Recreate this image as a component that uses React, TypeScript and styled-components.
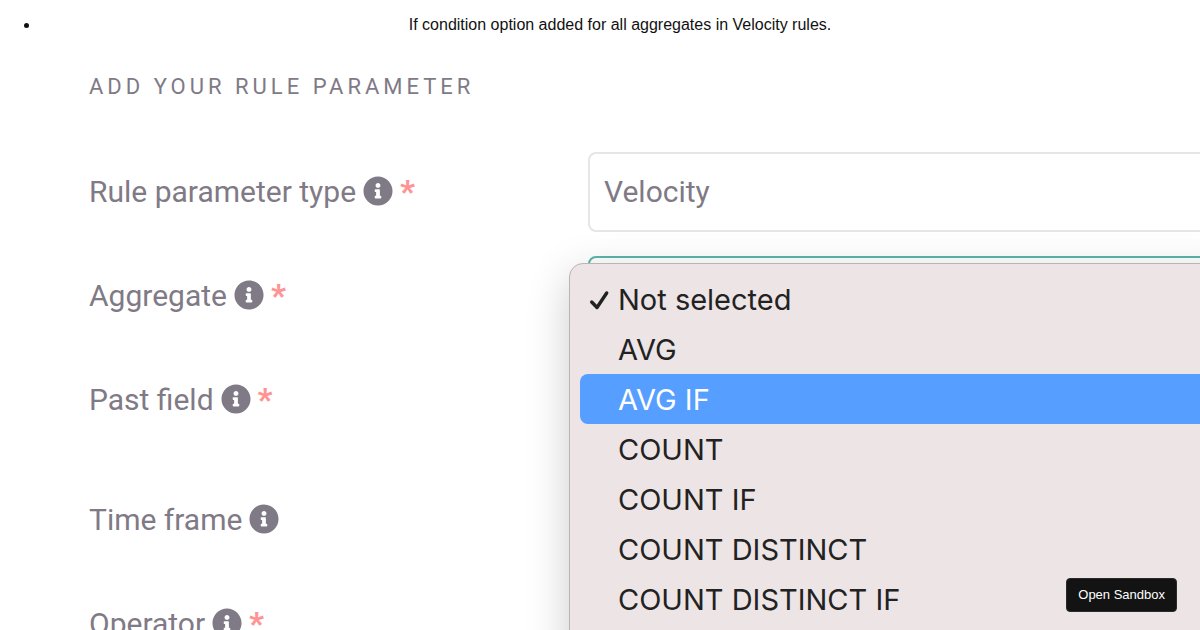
import React from "react";
import styled, { createGlobalStyle } from "styled-components";
import { FaInfoCircle } from "react-icons/fa";

const GlobalStyle = createGlobalStyle`
  * { box-sizing: border-box; }
  body {
    margin: 0;
    background: #fff;
    color: #111;
    font-family: "Helvetica Neue", Helvetica, "Liberation Sans", sans-serif;
  }
`;

const Page = styled.main`
  position: relative;
  height: 100vh;
  overflow: hidden;
`;

const Notes = styled.ul`
  margin: 16px 0 0;
  padding-left: 40px;
  font-size: 16px;
  line-height: 18px;
  text-align: center;
`;

const Form = styled.form`
  display: flex;
  flex-direction: column;
  margin: 36px -40px 0 89px;
  color: #7f7a86;
  font-family: Roboto, sans-serif;
`;

const Title = styled.h2`
  margin: 0 0 48px;
  font-size: 22px;
  font-weight: 400;
  line-height: 34px;
  letter-spacing: 4px;
`;

const Row = styled.div<{ $spaced?: boolean }>`
  display: grid;
  grid-template-columns: 499px 1fr;
  align-items: center;
  height: 80px;
  margin-bottom: ${(p) => (p.$spaced ? 40 : 24)}px;
`;

const LabelCell = styled.div`
  display: flex;
  align-items: center;
  gap: 7px;
  padding-bottom: 2px;
`;

const Label = styled.label`
  padding-top: 2px;
  font-size: 30px;
  line-height: 40px;
`;

const InfoButton = styled.button`
  display: flex;
  padding: 0;
  border: 0;
  background: none;
  color: inherit;
  font-size: 30px;
`;

const Required = styled.span`
  color: #ff9494;
  font-size: 32px;
  font-weight: 900;
  line-height: 40px;
`;

const Field = styled.select<{ $active?: boolean }>`
  appearance: none;
  width: 100%;
  height: 80px;
  padding: 0 14px 2px;
  border: 2px solid ${(p) => (p.$active ? "#5bb5a8" : "#e6e6e8")};
  border-radius: 8px;
  outline: 0;
  background: #fff;
  color: #7f7a86;
  font: 30px Roboto, sans-serif;
`;

const Menu = styled.ul`
  position: absolute;
  top: 263px;
  left: 569px;
  right: -40px;
  bottom: -40px;
  margin: 0;
  padding: 10px;
  border: 1px solid #b9b5b7;
  border-radius: 14px;
  background: #ede4e5;
  box-shadow: 0 12px 44px rgba(0, 0, 0, 0.2);
  list-style: none;
`;

const Option = styled.li<{ $active?: boolean }>`
  display: grid;
  grid-template-columns: 22px 1fr;
  align-items: center;
  gap: 8px;
  height: 50px;
  padding-left: 8px;
  border-radius: 8px;
  background: ${(p) => (p.$active ? "#569eff" : "transparent")};
  color: ${(p) => (p.$active ? "#fff" : "#222")};
  font-family: Inter, sans-serif;
  font-size: 29px;
  line-height: 48px;
`;

const OptionText = styled.span`
  grid-column: 2;
  padding-top: 2px;
`;

const SandboxButton = styled.button`
  position: fixed;
  right: 23px;
  bottom: 18px;
  height: 34px;
  padding: 0 11px 2px;
  border: 1px solid #2a2a2a;
  border-radius: 4px;
  background: #131313;
  color: #fff;
  font: 13px "Helvetica Neue", Helvetica, "Liberation Sans", sans-serif;
`;

const fields = [
  { id: "type", label: "Rule parameter type", value: "Velocity", required: true },
  { id: "aggregate", label: "Aggregate", required: true, active: true },
  { id: "past-field", label: "Past field", required: true, spaced: true },
  { id: "time-frame", label: "Time frame" },
  { id: "operator", label: "Operator", required: true },
];

const aggregates = [
  "Not selected",
  "AVG",
  "AVG IF",
  "COUNT",
  "COUNT IF",
  "COUNT DISTINCT",
  "COUNT DISTINCT IF",
];

const Check = () => (
  <svg width="22" height="22" viewBox="0 0 22 22" fill="none" aria-hidden="true">
    <path
      d="M3.7 14 9 19.5 18.7 5"
      stroke="currentColor"
      strokeWidth="3.4"
      strokeLinecap="round"
      strokeLinejoin="round"
    />
  </svg>
);

export default function App() {
  return (
    <>
      <GlobalStyle />
      <Page>
        <Notes>
          <li>If condition option added for all aggregates in Velocity rules.</li>
        </Notes>
        <Form>
          <Title>ADD YOUR RULE PARAMETER</Title>
          {fields.map((f) => (
            <Row key={f.id} $spaced={f.spaced}>
              <LabelCell>
                <Label htmlFor={f.id}>{f.label}</Label>
                <InfoButton type="button" aria-label={`About ${f.label}`}>
                  <FaInfoCircle />
                </InfoButton>
                {f.required && <Required>*</Required>}
              </LabelCell>
              <Field id={f.id} $active={f.active}>
                {f.value && <option>{f.value}</option>}
              </Field>
            </Row>
          ))}
        </Form>
        <Menu role="listbox" aria-label="Aggregate">
          {aggregates.map((name, i) => (
            <Option key={name} role="option" aria-selected={i === 0} $active={name === "AVG IF"}>
              {i === 0 && <Check />}
              <OptionText>{name}</OptionText>
            </Option>
          ))}
        </Menu>
        <SandboxButton type="button">Open Sandbox</SandboxButton>
      </Page>
    </>
  );
}
